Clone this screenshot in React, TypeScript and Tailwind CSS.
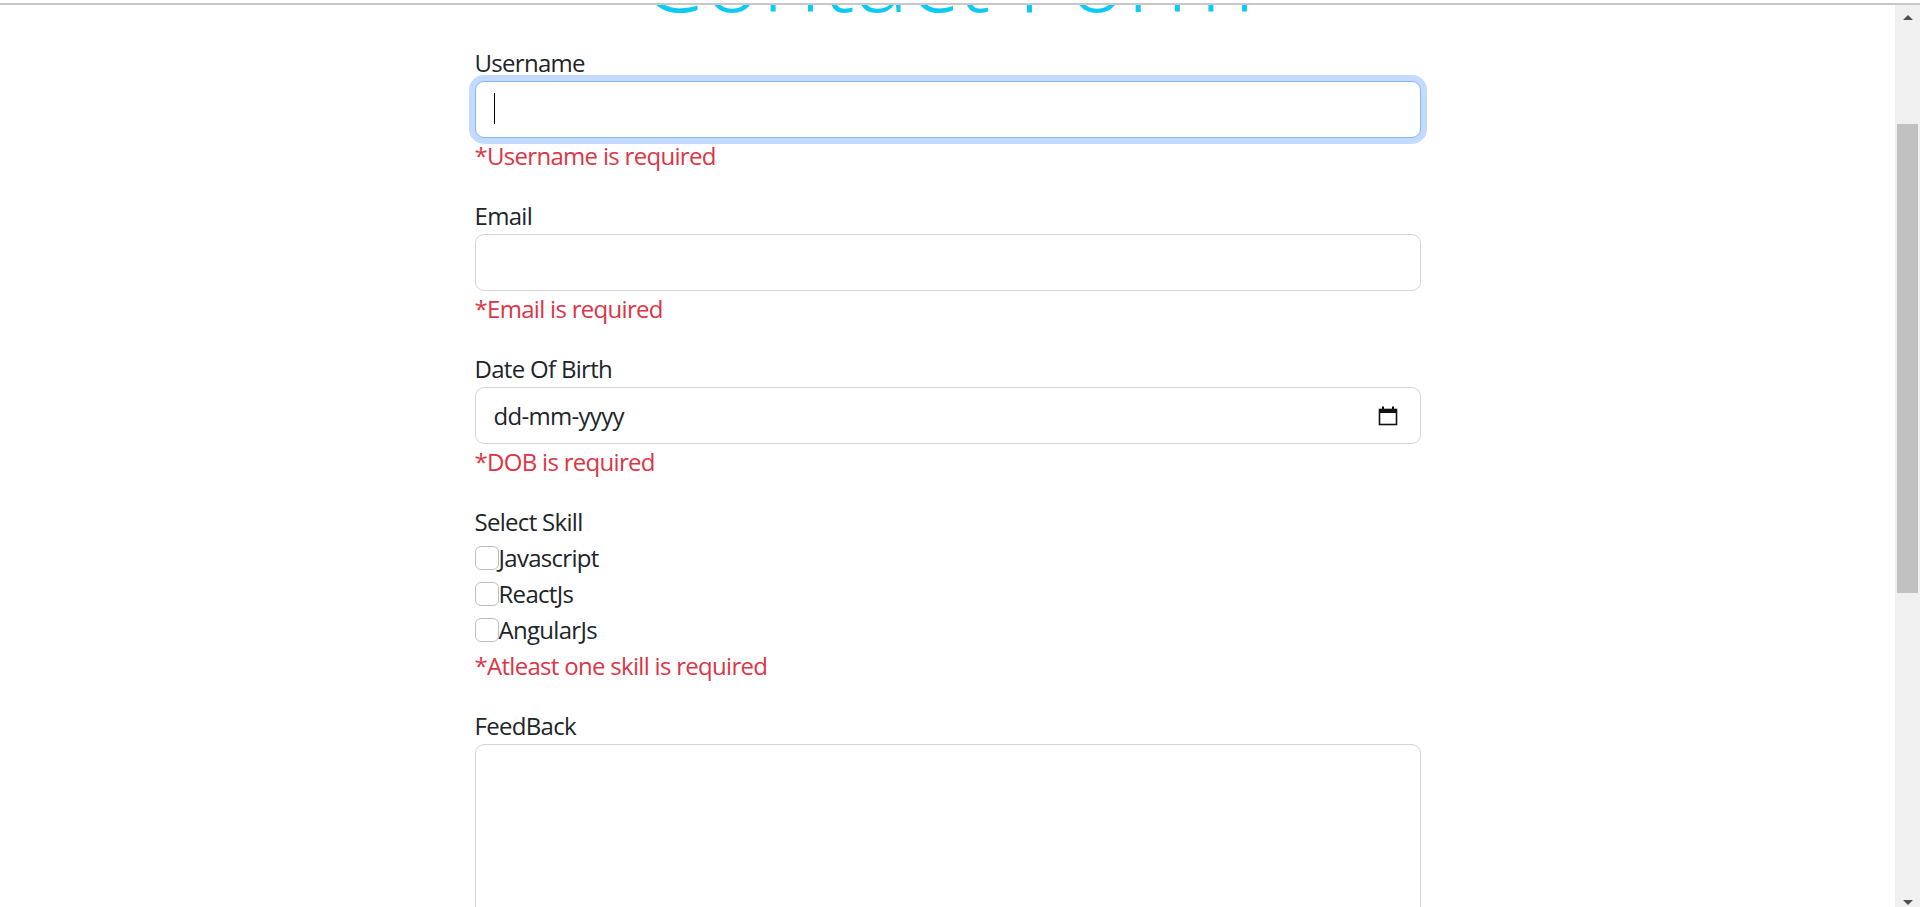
import React from "react"

const font = { fontFamily: '"Open Sans", "Noto Sans", sans-serif' }

function Field({ label, error, children }: { label: string; error: string; children: React.ReactNode }) {
  return (
    <div className="mb-[24px]">
      <label className="block h-[36px] leading-[36px]">{label}</label>
      {children}
      <div className="h-[36px] leading-[36px] text-[#dc3545]">{error}</div>
    </div>
  )
}

function CalendarIcon() {
  return (
    <svg width="20" height="20" viewBox="0 0 20 20" fill="none">
      <rect x="1.5" y="3.5" width="17" height="15" stroke="#111" strokeWidth="1.6" />
      <rect x="1.5" y="3.5" width="17" height="3.5" fill="#111" />
      <rect x="4" y="0.5" width="2" height="3" fill="#111" />
      <rect x="14" y="0.5" width="2" height="3" fill="#111" />
    </svg>
  )
}

function Skill({ name }: { name: string }) {
  return (
    <label className="flex h-[36px] items-start leading-[36px]">
      <span className="mt-[6px] block h-[24px] w-[24px] shrink-0 rounded-[6px] border border-[#bfbfbf] bg-white" />
      <span>{name}</span>
    </label>
  )
}

export default function App() {
  const inputBase = "block h-[57px] w-full rounded-[9px] border bg-white px-[18px] text-[24px] outline-none"

  return (
    <div className="flex h-[907px] flex-col overflow-hidden bg-white text-[24px] tracking-[-0.7px] text-[#212529]" style={font}>
      <div className="h-[3px] shrink-0 bg-white" />
      <div className="h-[2px] shrink-0 bg-[#c8c8c8]" />

      <div className="flex min-h-0 flex-1">
        {/* page */}
        <main className="min-w-0 flex-1 overflow-hidden">
          <h1 className="mt-[-92px] mb-[11px] text-center text-[101px] leading-[1.2] font-light tracking-normal text-[#0dcaf0]">
            Contact Form
          </h1>

          <form className="mx-auto w-[946px]">
            <Field label="Username" error="*Username is required">
              <div className="relative">
                <input
                  className={`${inputBase} border-[#86b7fe] shadow-[0_0_0_6px_rgba(13,110,253,0.25)]`}
                  style={font}
                />
                <span className="absolute left-[19px] top-[12px] h-[31px] w-px bg-black" />
              </div>
            </Field>

            <Field label="Email" error="*Email is required">
              <input className={`${inputBase} border-[#d3d7dc]`} style={font} />
            </Field>

            <Field label="Date Of Birth" error="*DOB is required">
              <div className="flex h-[57px] w-full items-center justify-between rounded-[9px] border border-[#d3d7dc] bg-white pl-[18px] pr-[22px]">
                <span>dd-mm-yyyy</span>
                <CalendarIcon />
              </div>
            </Field>

            <div className="mb-[24px]">
              <div className="h-[36px] leading-[36px]">Select Skill</div>
              <Skill name="Javascript" />
              <Skill name="ReactJs" />
              <Skill name="AngularJs" />
              <div className="h-[36px] leading-[36px] text-[#dc3545]">*Atleast one skill is required</div>
            </div>

            <div>
              <label className="block h-[36px] leading-[36px]">FeedBack</label>
              <textarea
                className="block h-[220px] w-full resize-none rounded-[9px] border border-[#d3d7dc] bg-white px-[18px] py-[9px] outline-none"
                style={font}
              />
            </div>
          </form>
        </main>

        {/* scrollbar */}
        <div className="flex w-[25px] shrink-0 flex-col bg-[#f0f0f0]">
          <div className="flex h-[24px] items-center justify-center">
            <span className="h-0 w-0 border-x-[5px] border-b-[5px] border-x-transparent border-b-[#505050]" />
          </div>
          <div className="h-[95px]" />
          <div className="mx-[2px] h-[469px] bg-[#c1c1c1]" />
          <div className="flex-1" />
          <div className="flex h-[9px] items-start justify-center pt-[2px]">
            <span className="h-0 w-0 border-x-[5px] border-t-[5px] border-x-transparent border-t-[#505050]" />
          </div>
        </div>
      </div>
    </div>
  )
}
